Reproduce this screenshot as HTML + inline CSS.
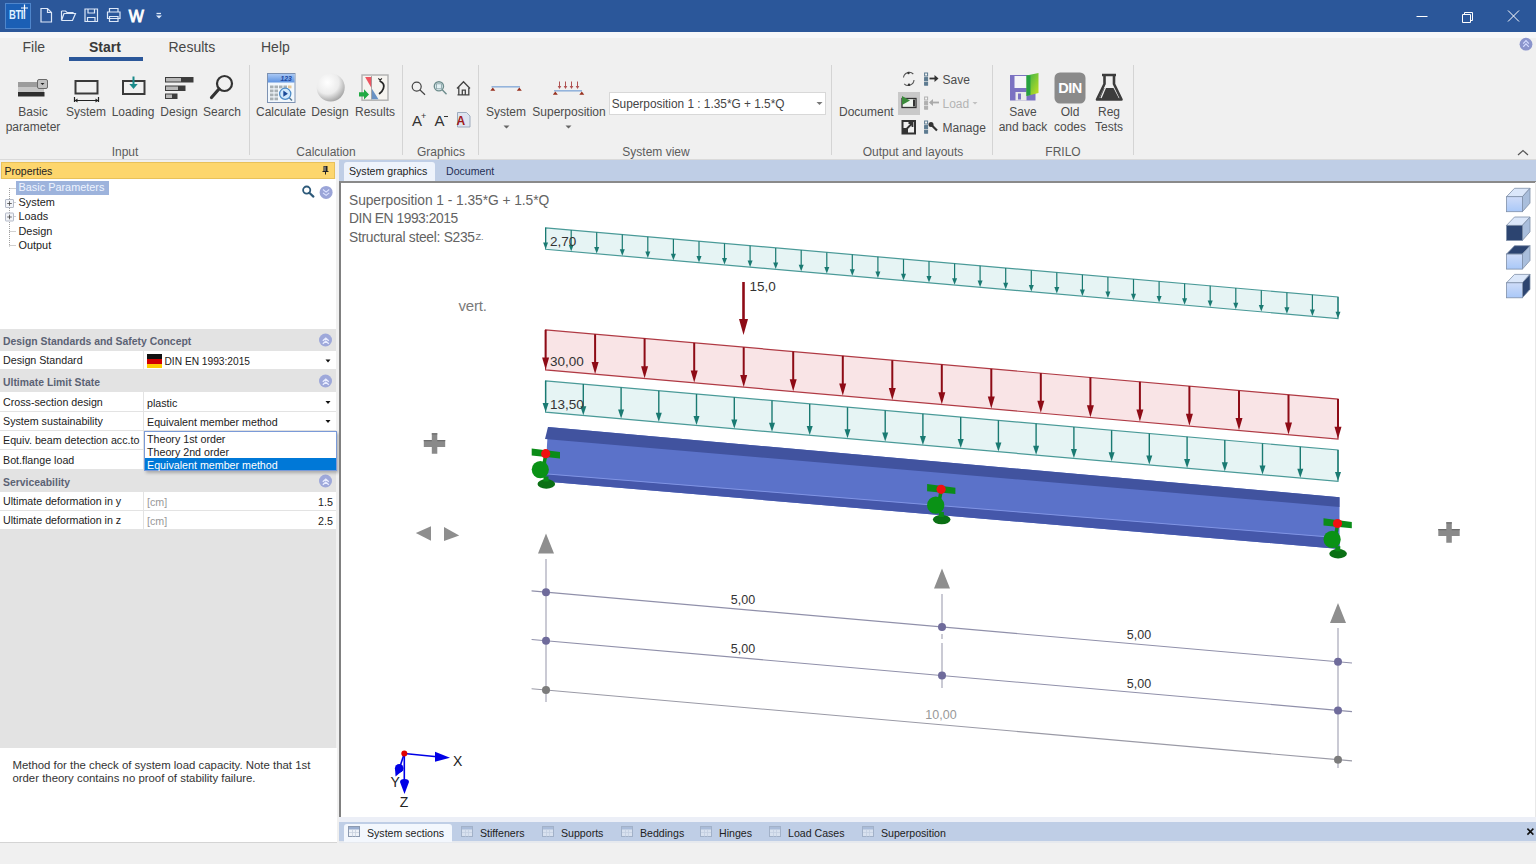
<!DOCTYPE html><html><head><meta charset="utf-8"><style>
*{box-sizing:border-box;margin:0;padding:0}
html,body{width:1536px;height:864px;overflow:hidden;background:#f0f0f0;font-family:"Liberation Sans",sans-serif;color:#222}
.a{position:absolute}
.t{position:absolute;white-space:nowrap;line-height:1}
svg{position:absolute;overflow:visible}
</style></head><body><div class="a" style="left:0px;top:0px;width:1536px;height:32px;background:#2b579a"></div>
<div class="a" style="left:0px;top:32px;width:1536px;height:6px;background:#f6f7f9"></div>
<div class="a" style="left:5px;top:3px;width:26px;height:26px;background:#1b5fb5;border:1px solid #4f86cc"></div>
<div class="t" style="left:9px;top:11.4px;font-size:9.5px;color:#dff0ff;font-weight:bold;letter-spacing:-0.4px;transform:scaleY(1.25);transform-origin:0 100%">BTII</div>
<svg style="left:0;top:0" width="40" height="32"><path d="M24.5 4.5v7M21 8h7" stroke="#fff" stroke-width="1.2"/></svg>
<svg style="left:0;top:0" width="170" height="32" fill="none" stroke="#dde8f8" stroke-width="1.2">
<path d="M41 8.5h6.5l4 4v9.5h-10.5z M47.5 8.5v4h4"/>
<path d="M61.5 11v9.5l2.5-7h11.5l-3 7h-11 M61.5 11h4l1.5 1.5h6v1.5"/>
<path d="M85 9h12.5v12.5h-12.5z M88 9v4h6.5v-4 M87.5 21.5v-4h7.5v4"/>
<path d="M109.5 12v-3.5h8.5v3.5 M107.5 12h12.5v6.5h-12.5z M109.5 16.5h8.5v5h-8.5z"/>
<path d="M156.5 13.5h4.5" stroke-width="1.3"/>
<path d="M156 15.5h6l-3 3z" fill="#dde8f8" stroke="none"/>
</svg>
<div class="t" style="left:128.8px;top:9.0px;font-size:16px;color:#fff;font-weight:normal;-webkit-text-stroke:0.9px #fff">W</div>
<svg style="left:0;top:0" width="1536" height="32" fill="none" stroke="#fff" stroke-width="1">
<path d="M1416.5 16.5h11"/>
<path d="M1462.5 14.5h8v8h-8z M1464.5 14.5v-2h8v8h-2"/>
<path d="M1508 10.5l11 11 M1519 10.5l-11 11"/>
</svg>
<div class="t" style="left:22.5px;top:40.4px;font-size:14px;color:#474747;font-weight:normal;">File</div>
<div class="t" style="left:89px;top:40.4px;font-size:14px;color:#383838;font-weight:bold;">Start</div>
<div class="t" style="left:168.5px;top:40.4px;font-size:14px;color:#474747;font-weight:normal;">Results</div>
<div class="t" style="left:261px;top:40.4px;font-size:14px;color:#474747;font-weight:normal;">Help</div>
<div class="a" style="left:69px;top:57px;width:74px;height:4px;background:#2b579a"></div>
<svg style="left:0;top:0" width="1536" height="60"><circle cx="1526" cy="44.2" r="6.4" fill="#8a94cc"/><path d="M1523.2 46.8l2.8-3 2.8 3 M1523.2 43.6l2.8-3 2.8 3" stroke="#d4dcff" stroke-width="1.2" fill="none"/></svg>
<div class="a" style="left:0px;top:159px;width:1536px;height:1px;background:#dadada"></div>
<div class="a" style="left:249px;top:65px;width:1px;height:90px;background:#d4d4d4"></div>
<div class="a" style="left:402px;top:65px;width:1px;height:90px;background:#d4d4d4"></div>
<div class="a" style="left:478px;top:65px;width:1px;height:90px;background:#d4d4d4"></div>
<div class="a" style="left:831px;top:65px;width:1px;height:90px;background:#d4d4d4"></div>
<div class="a" style="left:992px;top:65px;width:1px;height:90px;background:#d4d4d4"></div>
<div class="a" style="left:1133px;top:65px;width:1px;height:90px;background:#d4d4d4"></div>
<div class="t" style="left:25px;width:200px;text-align:center;top:145.8px;font-size:12px;color:#5c5c5c;font-weight:normal;">Input</div>
<div class="t" style="left:226px;width:200px;text-align:center;top:145.8px;font-size:12px;color:#5c5c5c;font-weight:normal;">Calculation</div>
<div class="t" style="left:341px;width:200px;text-align:center;top:145.8px;font-size:12px;color:#5c5c5c;font-weight:normal;">Graphics</div>
<div class="t" style="left:556px;width:200px;text-align:center;top:145.8px;font-size:12px;color:#5c5c5c;font-weight:normal;">System view</div>
<div class="t" style="left:813px;width:200px;text-align:center;top:145.8px;font-size:12px;color:#5c5c5c;font-weight:normal;">Output and layouts</div>
<div class="t" style="left:963px;width:200px;text-align:center;top:145.8px;font-size:12px;color:#5c5c5c;font-weight:normal;">FRILO</div>
<div class="t" style="left:-67px;width:200px;text-align:center;top:106.0px;font-size:12px;color:#4c4c4c;font-weight:normal;">Basic</div>
<div class="t" style="left:-14px;width:200px;text-align:center;top:106.0px;font-size:12px;color:#4c4c4c;font-weight:normal;">System</div>
<div class="t" style="left:33px;width:200px;text-align:center;top:106.0px;font-size:12px;color:#4c4c4c;font-weight:normal;">Loading</div>
<div class="t" style="left:79px;width:200px;text-align:center;top:106.0px;font-size:12px;color:#4c4c4c;font-weight:normal;">Design</div>
<div class="t" style="left:122px;width:200px;text-align:center;top:106.0px;font-size:12px;color:#4c4c4c;font-weight:normal;">Search</div>
<div class="t" style="left:181px;width:200px;text-align:center;top:106.0px;font-size:12px;color:#4c4c4c;font-weight:normal;">Calculate</div>
<div class="t" style="left:230px;width:200px;text-align:center;top:106.0px;font-size:12px;color:#4c4c4c;font-weight:normal;">Design</div>
<div class="t" style="left:275px;width:200px;text-align:center;top:106.0px;font-size:12px;color:#4c4c4c;font-weight:normal;">Results</div>
<div class="t" style="left:406px;width:200px;text-align:center;top:106.0px;font-size:12px;color:#4c4c4c;font-weight:normal;">System</div>
<div class="t" style="left:469px;width:200px;text-align:center;top:106.0px;font-size:12px;color:#4c4c4c;font-weight:normal;">Superposition</div>
<div class="t" style="left:923px;width:200px;text-align:center;top:106.0px;font-size:12px;color:#4c4c4c;font-weight:normal;">Save</div>
<div class="t" style="left:970px;width:200px;text-align:center;top:106.0px;font-size:12px;color:#4c4c4c;font-weight:normal;">Old</div>
<div class="t" style="left:1009px;width:200px;text-align:center;top:106.0px;font-size:12px;color:#4c4c4c;font-weight:normal;">Reg</div>
<div class="t" style="left:-67px;width:200px;text-align:center;top:121.1px;font-size:12px;color:#4c4c4c;font-weight:normal;">parameter</div>
<div class="t" style="left:923px;width:200px;text-align:center;top:121.1px;font-size:12px;color:#4c4c4c;font-weight:normal;">and back</div>
<div class="t" style="left:970px;width:200px;text-align:center;top:121.1px;font-size:12px;color:#4c4c4c;font-weight:normal;">codes</div>
<div class="t" style="left:1009px;width:200px;text-align:center;top:121.1px;font-size:12px;color:#4c4c4c;font-weight:normal;">Tests</div>
<div class="t" style="left:839px;top:106.0px;font-size:12px;color:#4c4c4c;font-weight:normal;">Document</div>
<div class="t" style="left:942.5px;top:74.3px;font-size:12px;color:#4c4c4c;font-weight:normal;">Save</div>
<div class="t" style="left:942.5px;top:98.3px;font-size:12px;color:#b4b4b4;font-weight:normal;">Load</div>
<div class="t" style="left:942.5px;top:122.3px;font-size:12px;color:#4c4c4c;font-weight:normal;">Manage</div>
<div class="a" style="left:1px;top:162px;width:334px;height:17px;background:#fdd66d;border:1px solid #e8c15a"></div>
<div class="t" style="left:4.5px;top:165.5px;font-size:10.5px;color:#222;font-weight:normal;">Properties</div>
<div class="a" style="left:0px;top:179px;width:336px;height:150px;background:#fff"></div>
<div class="a" style="left:16px;top:181px;width:93px;height:14px;background:#9db3dc"></div>
<div class="t" style="left:18.5px;top:181.8px;font-size:10.9px;color:#eef3ff;font-weight:normal;">Basic Parameters</div>
<div class="t" style="left:18.5px;top:197.3px;font-size:10.9px;color:#222;font-weight:normal;">System</div>
<div class="t" style="left:18.5px;top:211.2px;font-size:10.9px;color:#222;font-weight:normal;">Loads</div>
<div class="t" style="left:18.5px;top:225.6px;font-size:10.9px;color:#222;font-weight:normal;">Design</div>
<div class="t" style="left:18.5px;top:240.1px;font-size:10.9px;color:#222;font-weight:normal;">Output</div>
<div class="a" style="left:0px;top:329px;width:336px;height:419px;background:#e3e3e3"></div>
<div class="a" style="left:0px;top:329px;width:336px;height:22px;background:#e3e3e3"></div>
<div class="t" style="left:3px;top:337.0px;font-size:10.4px;color:#5b6274;font-weight:bold;">Design Standards and Safety Concept</div>
<svg style="left:0;top:0" width="1" height="1"><circle cx="325.5" cy="340" r="6.5" fill="#9ea8da"/></svg>
<div class="a" style="left:0px;top:351px;width:336px;height:18px;background:#fff"></div>
<div class="a" style="left:143px;top:351px;width:1px;height:19px;background:#e3e3e3"></div>
<div class="t" style="left:3px;top:354.8px;font-size:10.7px;color:#222;font-weight:normal;">Design Standard</div>
<div class="a" style="left:0px;top:370px;width:336px;height:22px;background:#e3e3e3"></div>
<div class="t" style="left:3px;top:378.0px;font-size:10.4px;color:#5b6274;font-weight:bold;">Ultimate Limit State</div>
<svg style="left:0;top:0" width="1" height="1"><circle cx="325.5" cy="381" r="6.5" fill="#9ea8da"/></svg>
<div class="a" style="left:0px;top:392px;width:336px;height:19px;background:#fff"></div>
<div class="a" style="left:143px;top:392px;width:1px;height:20px;background:#e3e3e3"></div>
<div class="t" style="left:3px;top:396.8px;font-size:10.7px;color:#222;font-weight:normal;">Cross-section design</div>
<div class="t" style="left:147px;top:397.5px;font-size:10.7px;color:#222;font-weight:normal;">plastic</div>
<div class="a" style="left:0px;top:412px;width:336px;height:18px;background:#fff"></div>
<div class="a" style="left:143px;top:412px;width:1px;height:19px;background:#e3e3e3"></div>
<div class="t" style="left:3px;top:415.8px;font-size:10.7px;color:#222;font-weight:normal;">System sustainability</div>
<div class="t" style="left:147px;top:416.5px;font-size:10.7px;color:#222;font-weight:normal;">Equivalent member method</div>
<div class="a" style="left:0px;top:431px;width:336px;height:18px;background:#fff"></div>
<div class="a" style="left:143px;top:431px;width:1px;height:19px;background:#e3e3e3"></div>
<div class="t" style="left:3px;top:434.8px;font-size:10.7px;color:#222;font-weight:normal;">Equiv. beam detection acc.to</div>
<div class="a" style="left:0px;top:450px;width:336px;height:19px;background:#fff"></div>
<div class="a" style="left:143px;top:450px;width:1px;height:20px;background:#e3e3e3"></div>
<div class="t" style="left:3px;top:454.8px;font-size:10.7px;color:#222;font-weight:normal;">Bot.flange load</div>
<div class="a" style="left:0px;top:470px;width:336px;height:22px;background:#e3e3e3"></div>
<div class="t" style="left:3px;top:478.0px;font-size:10.4px;color:#5b6274;font-weight:bold;">Serviceability</div>
<svg style="left:0;top:0" width="1" height="1"><circle cx="325.5" cy="481" r="6.5" fill="#9ea8da"/></svg>
<div class="a" style="left:0px;top:492px;width:336px;height:18px;background:#fff"></div>
<div class="a" style="left:143px;top:492px;width:1px;height:19px;background:#e3e3e3"></div>
<div class="t" style="left:3px;top:495.8px;font-size:10.7px;color:#222;font-weight:normal;">Ultimate deformation in y</div>
<div class="t" style="left:147px;top:496.5px;font-size:10.7px;color:#999;font-weight:normal;">[cm]</div>
<div class="a" style="left:0px;top:511px;width:336px;height:18px;background:#fff"></div>
<div class="a" style="left:143px;top:511px;width:1px;height:19px;background:#e3e3e3"></div>
<div class="t" style="left:3px;top:514.8px;font-size:10.7px;color:#222;font-weight:normal;">Ultimate deformation in z</div>
<div class="t" style="left:147px;top:515.5px;font-size:10.7px;color:#999;font-weight:normal;">[cm]</div>
<div class="t" style="left:164.5px;top:357.1px;font-size:10.2px;color:#222;font-weight:normal;">DIN EN 1993:2015</div>
<div class="a" style="left:147px;top:354px;width:15px;height:5px;background:#111"></div><div class="a" style="left:147px;top:359px;width:15px;height:5px;background:#d10000"></div><div class="a" style="left:147px;top:364px;width:15px;height:4px;background:#fc0"></div>
<div class="t" style="left:318px;top:496.8px;font-size:10.7px;color:#222;font-weight:normal;">1.5</div>
<div class="t" style="left:318px;top:515.8px;font-size:10.7px;color:#222;font-weight:normal;">2.5</div>
<div class="a" style="left:144px;top:431px;width:193px;height:40px;background:#fff;border:1px solid #7a9ad8;box-shadow:2px 2px 3px rgba(0,0,0,0.25)"></div>
<div class="a" style="left:145px;top:458px;width:191px;height:12px;background:#0078d7"></div>
<div class="t" style="left:147px;top:433.8px;font-size:10.7px;color:#222;font-weight:normal;">Theory 1st order</div>
<div class="t" style="left:147px;top:446.8px;font-size:10.7px;color:#222;font-weight:normal;">Theory 2nd order</div>
<div class="t" style="left:147px;top:459.8px;font-size:10.7px;color:#fff;font-weight:normal;">Equivalent member method</div>
<div class="a" style="left:0px;top:748px;width:337px;height:95px;background:#fff;border-bottom:1px solid #d4d4d4"></div>
<div class="t" style="left:12.4px;top:759.7px;font-size:11.4px;color:#333;font-weight:normal;">Method for the check of system load capacity. Note that 1st</div>
<div class="t" style="left:12.4px;top:773.2px;font-size:11.4px;color:#333;font-weight:normal;">order theory contains no proof of stability failure.</div>
<div class="a" style="left:339px;top:160px;width:1197px;height:22px;background:#bfcee6"></div>
<div class="a" style="left:344px;top:162px;width:91px;height:19px;background:#eef3fb;border-radius:3px 3px 0 0"></div>
<div class="t" style="left:349px;top:165.8px;font-size:10.6px;color:#222;font-weight:normal;">System graphics</div>
<div class="t" style="left:446px;top:165.8px;font-size:10.6px;color:#1f2f55;font-weight:normal;">Document</div>
<div class="a" style="left:339px;top:181px;width:1197px;height:637px;background:#fff;border-left:2px solid #808080;border-top:2px solid #8a8a8a"></div>
<div class="a" style="left:339px;top:817px;width:1197px;height:5px;background:#eceff7"></div>
<div class="a" style="left:339px;top:822px;width:1197px;height:19px;background:#bfcee6"></div>
<div class="a" style="left:339px;top:841px;width:1197px;height:2px;background:#e6e9ee"></div>
<div class="a" style="left:344px;top:824px;width:108px;height:18px;background:#f3f7fd;border-radius:3px 3px 0 0"></div>
<div class="t" style="left:367px;top:827.8px;font-size:10.6px;color:#222;font-weight:normal;">System sections</div>
<div class="t" style="left:480px;top:827.8px;font-size:10.6px;color:#222;font-weight:normal;">Stiffeners</div>
<div class="t" style="left:561px;top:827.8px;font-size:10.6px;color:#222;font-weight:normal;">Supports</div>
<div class="t" style="left:640px;top:827.8px;font-size:10.6px;color:#222;font-weight:normal;">Beddings</div>
<div class="t" style="left:719px;top:827.8px;font-size:10.6px;color:#222;font-weight:normal;">Hinges</div>
<div class="t" style="left:788px;top:827.8px;font-size:10.6px;color:#222;font-weight:normal;">Load Cases</div>
<div class="t" style="left:881px;top:827.8px;font-size:10.6px;color:#222;font-weight:normal;">Superposition</div>
<svg style="left:0;top:0" width="1536" height="864"><g opacity="1"><rect x="348.5" y="826.5" width="11" height="10" fill="#eef2f8" stroke="#8c9ab0" stroke-width="1"/><rect x="349" y="827" width="10" height="2.5" fill="#9aaed0"/><path d="M352.5 829.5v7 M355.5 829.5v7 M349 832.5h10" stroke="#c8d0de" stroke-width="0.8"/></g><g opacity="0.55"><rect x="461.5" y="826.5" width="11" height="10" fill="#eef2f8" stroke="#8c9ab0" stroke-width="1"/><rect x="462" y="827" width="10" height="2.5" fill="#9aaed0"/><path d="M465.5 829.5v7 M468.5 829.5v7 M462 832.5h10" stroke="#c8d0de" stroke-width="0.8"/></g><g opacity="0.55"><rect x="542.5" y="826.5" width="11" height="10" fill="#eef2f8" stroke="#8c9ab0" stroke-width="1"/><rect x="543" y="827" width="10" height="2.5" fill="#9aaed0"/><path d="M546.5 829.5v7 M549.5 829.5v7 M543 832.5h10" stroke="#c8d0de" stroke-width="0.8"/></g><g opacity="0.55"><rect x="621.5" y="826.5" width="11" height="10" fill="#eef2f8" stroke="#8c9ab0" stroke-width="1"/><rect x="622" y="827" width="10" height="2.5" fill="#9aaed0"/><path d="M625.5 829.5v7 M628.5 829.5v7 M622 832.5h10" stroke="#c8d0de" stroke-width="0.8"/></g><g opacity="0.55"><rect x="700.5" y="826.5" width="11" height="10" fill="#eef2f8" stroke="#8c9ab0" stroke-width="1"/><rect x="701" y="827" width="10" height="2.5" fill="#9aaed0"/><path d="M704.5 829.5v7 M707.5 829.5v7 M701 832.5h10" stroke="#c8d0de" stroke-width="0.8"/></g><g opacity="0.55"><rect x="769.5" y="826.5" width="11" height="10" fill="#eef2f8" stroke="#8c9ab0" stroke-width="1"/><rect x="770" y="827" width="10" height="2.5" fill="#9aaed0"/><path d="M773.5 829.5v7 M776.5 829.5v7 M770 832.5h10" stroke="#c8d0de" stroke-width="0.8"/></g><g opacity="0.55"><rect x="862.5" y="826.5" width="11" height="10" fill="#eef2f8" stroke="#8c9ab0" stroke-width="1"/><rect x="863" y="827" width="10" height="2.5" fill="#9aaed0"/><path d="M866.5 829.5v7 M869.5 829.5v7 M863 832.5h10" stroke="#c8d0de" stroke-width="0.8"/></g><path d="M1527.4 828.6l6 6 M1533.4 828.6l-6 6" stroke="#111" stroke-width="1.5"/></svg>
<div class="a" style="left:1535px;top:182px;width:1px;height:635px;background:#e8e8e8"></div>
<div class="t" style="left:349px;top:194.4px;font-size:13.8px;color:#636363;font-weight:normal;letter-spacing:-0.06px">Superposition 1 - 1.35*G + 1.5*Q</div>
<div class="t" style="left:349px;top:212.4px;font-size:13.8px;color:#636363;font-weight:normal;letter-spacing:-0.45px">DIN EN 1993:2015</div>
<div class="t" style="left:349px;top:231.4px;font-size:13.8px;color:#636363;font-weight:normal;letter-spacing:-0.28px">Structural steel: S235</div>
<div class="t" style="left:475.5px;top:232.6px;font-size:9px;color:#6a6a6a;font-weight:normal;">Z.</div>
<div class="t" style="left:458.5px;top:298.1px;font-size:15px;color:#7a7a7a;font-weight:normal;letter-spacing:-0.2px">vert.</div>
<svg style="left:0;top:0" width="1536" height="864"><defs><linearGradient id="cf" x1="0" y1="0" x2="0" y2="1"><stop offset="0" stop-color="#cfdcf8"/><stop offset="1" stop-color="#a9c8f8"/></linearGradient></defs><polygon points="545.6,227.8 1338.0,297.0 1338.0,318.5 545.6,249.3" fill="#e6f4f4" stroke="#4a9a98" stroke-width="1.2"/><path d="M545.6 227.8V243.5" stroke="#1a7a72" stroke-width="1.2"/><path d="M543.1 242.5L548.1 242.5L545.6 249.0z" fill="#1a7a72"/><path d="M571.2 230.0V245.7" stroke="#1a7a72" stroke-width="1.2"/><path d="M568.7 244.7L573.7 244.7L571.2 251.2z" fill="#1a7a72"/><path d="M596.7 232.3V248.0" stroke="#1a7a72" stroke-width="1.2"/><path d="M594.2 247.0L599.2 247.0L596.7 253.5z" fill="#1a7a72"/><path d="M622.3 234.5V250.2" stroke="#1a7a72" stroke-width="1.2"/><path d="M619.8 249.2L624.8 249.2L622.3 255.7z" fill="#1a7a72"/><path d="M647.8 236.7V252.4" stroke="#1a7a72" stroke-width="1.2"/><path d="M645.3 251.4L650.3 251.4L647.8 257.9z" fill="#1a7a72"/><path d="M673.4 239.0V254.7" stroke="#1a7a72" stroke-width="1.2"/><path d="M670.9 253.7L675.9 253.7L673.4 260.2z" fill="#1a7a72"/><path d="M699.0 241.2V256.9" stroke="#1a7a72" stroke-width="1.2"/><path d="M696.5 255.9L701.5 255.9L699.0 262.4z" fill="#1a7a72"/><path d="M724.5 243.4V259.1" stroke="#1a7a72" stroke-width="1.2"/><path d="M722.0 258.1L727.0 258.1L724.5 264.6z" fill="#1a7a72"/><path d="M750.1 245.7V261.4" stroke="#1a7a72" stroke-width="1.2"/><path d="M747.6 260.4L752.6 260.4L750.1 266.9z" fill="#1a7a72"/><path d="M775.7 247.9V263.6" stroke="#1a7a72" stroke-width="1.2"/><path d="M773.2 262.6L778.2 262.6L775.7 269.1z" fill="#1a7a72"/><path d="M801.2 250.1V265.8" stroke="#1a7a72" stroke-width="1.2"/><path d="M798.7 264.8L803.7 264.8L801.2 271.3z" fill="#1a7a72"/><path d="M826.8 252.4V268.1" stroke="#1a7a72" stroke-width="1.2"/><path d="M824.3 267.1L829.3 267.1L826.8 273.6z" fill="#1a7a72"/><path d="M852.3 254.6V270.3" stroke="#1a7a72" stroke-width="1.2"/><path d="M849.8 269.3L854.8 269.3L852.3 275.8z" fill="#1a7a72"/><path d="M877.9 256.8V272.5" stroke="#1a7a72" stroke-width="1.2"/><path d="M875.4 271.5L880.4 271.5L877.9 278.0z" fill="#1a7a72"/><path d="M903.5 259.1V274.8" stroke="#1a7a72" stroke-width="1.2"/><path d="M901.0 273.8L906.0 273.8L903.5 280.3z" fill="#1a7a72"/><path d="M929.0 261.3V277.0" stroke="#1a7a72" stroke-width="1.2"/><path d="M926.5 276.0L931.5 276.0L929.0 282.5z" fill="#1a7a72"/><path d="M954.6 263.5V279.2" stroke="#1a7a72" stroke-width="1.2"/><path d="M952.1 278.2L957.1 278.2L954.6 284.7z" fill="#1a7a72"/><path d="M980.1 265.7V281.4" stroke="#1a7a72" stroke-width="1.2"/><path d="M977.6 280.4L982.6 280.4L980.1 286.9z" fill="#1a7a72"/><path d="M1005.7 268.0V283.7" stroke="#1a7a72" stroke-width="1.2"/><path d="M1003.2 282.7L1008.2 282.7L1005.7 289.2z" fill="#1a7a72"/><path d="M1031.3 270.2V285.9" stroke="#1a7a72" stroke-width="1.2"/><path d="M1028.8 284.9L1033.8 284.9L1031.3 291.4z" fill="#1a7a72"/><path d="M1056.8 272.4V288.1" stroke="#1a7a72" stroke-width="1.2"/><path d="M1054.3 287.1L1059.3 287.1L1056.8 293.6z" fill="#1a7a72"/><path d="M1082.4 274.7V290.4" stroke="#1a7a72" stroke-width="1.2"/><path d="M1079.9 289.4L1084.9 289.4L1082.4 295.9z" fill="#1a7a72"/><path d="M1107.9 276.9V292.6" stroke="#1a7a72" stroke-width="1.2"/><path d="M1105.4 291.6L1110.4 291.6L1107.9 298.1z" fill="#1a7a72"/><path d="M1133.5 279.1V294.8" stroke="#1a7a72" stroke-width="1.2"/><path d="M1131.0 293.8L1136.0 293.8L1133.5 300.3z" fill="#1a7a72"/><path d="M1159.1 281.4V297.1" stroke="#1a7a72" stroke-width="1.2"/><path d="M1156.6 296.1L1161.6 296.1L1159.1 302.6z" fill="#1a7a72"/><path d="M1184.6 283.6V299.3" stroke="#1a7a72" stroke-width="1.2"/><path d="M1182.1 298.3L1187.1 298.3L1184.6 304.8z" fill="#1a7a72"/><path d="M1210.2 285.8V301.5" stroke="#1a7a72" stroke-width="1.2"/><path d="M1207.7 300.5L1212.7 300.5L1210.2 307.0z" fill="#1a7a72"/><path d="M1235.8 288.1V303.8" stroke="#1a7a72" stroke-width="1.2"/><path d="M1233.3 302.8L1238.3 302.8L1235.8 309.3z" fill="#1a7a72"/><path d="M1261.3 290.3V306.0" stroke="#1a7a72" stroke-width="1.2"/><path d="M1258.8 305.0L1263.8 305.0L1261.3 311.5z" fill="#1a7a72"/><path d="M1286.9 292.5V308.2" stroke="#1a7a72" stroke-width="1.2"/><path d="M1284.4 307.2L1289.4 307.2L1286.9 313.7z" fill="#1a7a72"/><path d="M1312.4 294.8V310.5" stroke="#1a7a72" stroke-width="1.2"/><path d="M1309.9 309.5L1314.9 309.5L1312.4 316.0z" fill="#1a7a72"/><path d="M1338.0 297.0V312.7" stroke="#1a7a72" stroke-width="1.2"/><path d="M1335.5 311.7L1340.5 311.7L1338.0 318.2z" fill="#1a7a72"/><polygon points="545.6,329.9 1338.0,399.1 1338.0,439.1 545.6,369.9" fill="#f9e4e6" stroke="#b03a44" stroke-width="1.2"/><path d="M545.6 329.9V358.6" stroke="#8e0b16" stroke-width="2.0"/><path d="M542.1 357.6L549.1 357.6L545.6 369.6z" fill="#8e0b16"/><path d="M595.1 334.2V362.9" stroke="#8e0b16" stroke-width="2.0"/><path d="M591.6 361.9L598.6 361.9L595.1 373.9z" fill="#8e0b16"/><path d="M644.6 338.5V367.2" stroke="#8e0b16" stroke-width="2.0"/><path d="M641.1 366.2L648.1 366.2L644.6 378.2z" fill="#8e0b16"/><path d="M694.2 342.9V371.6" stroke="#8e0b16" stroke-width="2.0"/><path d="M690.7 370.6L697.7 370.6L694.2 382.6z" fill="#8e0b16"/><path d="M743.7 347.2V375.9" stroke="#8e0b16" stroke-width="2.0"/><path d="M740.2 374.9L747.2 374.9L743.7 386.9z" fill="#8e0b16"/><path d="M793.2 351.5V380.2" stroke="#8e0b16" stroke-width="2.0"/><path d="M789.7 379.2L796.7 379.2L793.2 391.2z" fill="#8e0b16"/><path d="M842.8 355.8V384.5" stroke="#8e0b16" stroke-width="2.0"/><path d="M839.2 383.5L846.2 383.5L842.8 395.5z" fill="#8e0b16"/><path d="M892.3 360.2V388.9" stroke="#8e0b16" stroke-width="2.0"/><path d="M888.8 387.9L895.8 387.9L892.3 399.9z" fill="#8e0b16"/><path d="M941.8 364.5V393.2" stroke="#8e0b16" stroke-width="2.0"/><path d="M938.3 392.2L945.3 392.2L941.8 404.2z" fill="#8e0b16"/><path d="M991.3 368.8V397.5" stroke="#8e0b16" stroke-width="2.0"/><path d="M987.8 396.5L994.8 396.5L991.3 408.5z" fill="#8e0b16"/><path d="M1040.8 373.1V401.8" stroke="#8e0b16" stroke-width="2.0"/><path d="M1037.3 400.8L1044.3 400.8L1040.8 412.8z" fill="#8e0b16"/><path d="M1090.4 377.5V406.2" stroke="#8e0b16" stroke-width="2.0"/><path d="M1086.9 405.2L1093.9 405.2L1090.4 417.2z" fill="#8e0b16"/><path d="M1139.9 381.8V410.5" stroke="#8e0b16" stroke-width="2.0"/><path d="M1136.4 409.5L1143.4 409.5L1139.9 421.5z" fill="#8e0b16"/><path d="M1189.4 386.1V414.8" stroke="#8e0b16" stroke-width="2.0"/><path d="M1185.9 413.8L1192.9 413.8L1189.4 425.8z" fill="#8e0b16"/><path d="M1239.0 390.4V419.1" stroke="#8e0b16" stroke-width="2.0"/><path d="M1235.5 418.1L1242.5 418.1L1239.0 430.1z" fill="#8e0b16"/><path d="M1288.5 394.8V423.5" stroke="#8e0b16" stroke-width="2.0"/><path d="M1285.0 422.5L1292.0 422.5L1288.5 434.5z" fill="#8e0b16"/><path d="M1338.0 399.1V427.8" stroke="#8e0b16" stroke-width="2.0"/><path d="M1334.5 426.8L1341.5 426.8L1338.0 438.8z" fill="#8e0b16"/><polygon points="545.6,380.8 1338.0,450.0 1338.0,481.4 545.6,412.2" fill="#e6f4f4" stroke="#4a9a98" stroke-width="1.2"/><path d="M545.6 380.8V403.9" stroke="#1a7a72" stroke-width="1.4"/><path d="M542.6 402.9L548.6 402.9L545.6 411.9z" fill="#1a7a72"/><path d="M583.3 384.1V407.2" stroke="#1a7a72" stroke-width="1.4"/><path d="M580.3 406.2L586.3 406.2L583.3 415.2z" fill="#1a7a72"/><path d="M621.1 387.4V410.5" stroke="#1a7a72" stroke-width="1.4"/><path d="M618.1 409.5L624.1 409.5L621.1 418.5z" fill="#1a7a72"/><path d="M658.8 390.7V413.8" stroke="#1a7a72" stroke-width="1.4"/><path d="M655.8 412.8L661.8 412.8L658.8 421.8z" fill="#1a7a72"/><path d="M696.5 394.0V417.1" stroke="#1a7a72" stroke-width="1.4"/><path d="M693.5 416.1L699.5 416.1L696.5 425.1z" fill="#1a7a72"/><path d="M734.3 397.3V420.4" stroke="#1a7a72" stroke-width="1.4"/><path d="M731.3 419.4L737.3 419.4L734.3 428.4z" fill="#1a7a72"/><path d="M772.0 400.6V423.7" stroke="#1a7a72" stroke-width="1.4"/><path d="M769.0 422.7L775.0 422.7L772.0 431.7z" fill="#1a7a72"/><path d="M809.7 403.9V427.0" stroke="#1a7a72" stroke-width="1.4"/><path d="M806.7 426.0L812.7 426.0L809.7 435.0z" fill="#1a7a72"/><path d="M847.5 407.2V430.3" stroke="#1a7a72" stroke-width="1.4"/><path d="M844.5 429.3L850.5 429.3L847.5 438.3z" fill="#1a7a72"/><path d="M885.2 410.5V433.6" stroke="#1a7a72" stroke-width="1.4"/><path d="M882.2 432.6L888.2 432.6L885.2 441.6z" fill="#1a7a72"/><path d="M922.9 413.8V436.9" stroke="#1a7a72" stroke-width="1.4"/><path d="M919.9 435.9L925.9 435.9L922.9 444.9z" fill="#1a7a72"/><path d="M960.7 417.0V440.1" stroke="#1a7a72" stroke-width="1.4"/><path d="M957.7 439.1L963.7 439.1L960.7 448.1z" fill="#1a7a72"/><path d="M998.4 420.3V443.4" stroke="#1a7a72" stroke-width="1.4"/><path d="M995.4 442.4L1001.4 442.4L998.4 451.4z" fill="#1a7a72"/><path d="M1036.1 423.6V446.7" stroke="#1a7a72" stroke-width="1.4"/><path d="M1033.1 445.7L1039.1 445.7L1036.1 454.7z" fill="#1a7a72"/><path d="M1073.9 426.9V450.0" stroke="#1a7a72" stroke-width="1.4"/><path d="M1070.9 449.0L1076.9 449.0L1073.9 458.0z" fill="#1a7a72"/><path d="M1111.6 430.2V453.3" stroke="#1a7a72" stroke-width="1.4"/><path d="M1108.6 452.3L1114.6 452.3L1111.6 461.3z" fill="#1a7a72"/><path d="M1149.3 433.5V456.6" stroke="#1a7a72" stroke-width="1.4"/><path d="M1146.3 455.6L1152.3 455.6L1149.3 464.6z" fill="#1a7a72"/><path d="M1187.1 436.8V459.9" stroke="#1a7a72" stroke-width="1.4"/><path d="M1184.1 458.9L1190.1 458.9L1187.1 467.9z" fill="#1a7a72"/><path d="M1224.8 440.1V463.2" stroke="#1a7a72" stroke-width="1.4"/><path d="M1221.8 462.2L1227.8 462.2L1224.8 471.2z" fill="#1a7a72"/><path d="M1262.5 443.4V466.5" stroke="#1a7a72" stroke-width="1.4"/><path d="M1259.5 465.5L1265.5 465.5L1262.5 474.5z" fill="#1a7a72"/><path d="M1300.3 446.7V469.8" stroke="#1a7a72" stroke-width="1.4"/><path d="M1297.3 468.8L1303.3 468.8L1300.3 477.8z" fill="#1a7a72"/><path d="M1338.0 450.0V473.1" stroke="#1a7a72" stroke-width="1.4"/><path d="M1335.0 472.1L1341.0 472.1L1338.0 481.1z" fill="#1a7a72"/><path d="M743.5 282V322" stroke="#8e0b16" stroke-width="2.6"/><path d="M739 319L748 319L743.5 335z" fill="#8e0b16"/><polygon points="548.0,427.0 1339.5,497.2 1339.5,549.0 545.0,481.5" fill="#5b72c9"/><polygon points="548.0,427.0 1339.5,497.2 1339.5,507.0 545.0,439.0" fill="#41539f"/><polygon points="545.0,474.0 1339.5,538.0 1339.5,549.0 545.0,481.5" fill="#4557aa"/><path d="M545 473.8L1339.5 537.8" stroke="#8094e4" stroke-width="1"/><ellipse cx="546.3" cy="484.0" rx="8.8" ry="4.7" fill="#0a7014"/><rect x="543.5" y="476.4" width="5" height="5" fill="#0a8a16"/><path d="M545.5 456.4L544 464.4" stroke="#0a8a16" stroke-width="3.5"/><circle cx="540.3" cy="469.59999999999997" r="8.6" fill="#0a9216"/><polygon points="531.7,448.4 560,452.09999999999997 560,458.5 531.7,455.59999999999997" fill="#0b8c18"/><circle cx="545.7" cy="453.7" r="4.6" fill="#f01010"/><ellipse cx="941.6999999999999" cy="519.6" rx="8.8" ry="4.7" fill="#0a7014"/><rect x="938.9" y="512" width="5" height="5" fill="#0a8a16"/><path d="M940.9 492L939.4 500" stroke="#0a8a16" stroke-width="3.5"/><circle cx="935.6999999999999" cy="505.2" r="8.6" fill="#0a9216"/><polygon points="927.1,484 955.4,487.7 955.4,494.1 927.1,491.2" fill="#0b8c18"/><circle cx="941.1" cy="489.3" r="4.6" fill="#f01010"/><ellipse cx="1338.1" cy="553.8000000000001" rx="8.8" ry="4.7" fill="#0a7014"/><rect x="1335.3" y="546.2" width="5" height="5" fill="#0a8a16"/><path d="M1337.3 526.2L1335.8 534.2" stroke="#0a8a16" stroke-width="3.5"/><circle cx="1332.1" cy="539.4000000000001" r="8.6" fill="#0a9216"/><polygon points="1323.5,518.2 1351.8,521.9000000000001 1351.8,528.3000000000001 1323.5,525.4000000000001" fill="#0b8c18"/><circle cx="1337.5" cy="523.5" r="4.6" fill="#f01010"/><path d="M546 559V702" stroke="#b9b9c6" stroke-width="1.5"/><path d="M942 594V631" stroke="#b9b9c6" stroke-width="1.5"/><path d="M942 634V639" stroke="#b9b9c6" stroke-width="1.5"/><path d="M942 643V688" stroke="#b9b9c6" stroke-width="1.5"/><path d="M1338 628V768" stroke="#b9b9c6" stroke-width="1.5"/><path d="M531.6 590.9L1352 663.0" stroke="#9090aa" stroke-width="1.1"/><path d="M531.6 639.5L1352 711.6" stroke="#9090aa" stroke-width="1.1"/><path d="M531.6 688.8L1352 760.9" stroke="#9a9aa6" stroke-width="1.1"/><circle cx="546" cy="592.2" r="4" fill="#6f6b9b"/><circle cx="546" cy="640.8" r="4" fill="#6f6b9b"/><circle cx="546" cy="690.1" r="4" fill="#7c7c7c"/><circle cx="942" cy="627.0" r="4" fill="#6f6b9b"/><circle cx="942" cy="675.6" r="4" fill="#6f6b9b"/><circle cx="1338" cy="661.8" r="4" fill="#6f6b9b"/><circle cx="1338" cy="710.4" r="4" fill="#6f6b9b"/><circle cx="1338" cy="759.7" r="4" fill="#7c7c7c"/><path d="M546 533.4L554 553.4L538 553.4z" fill="#8e8e8e"/><path d="M942 568.6L950 588.6L934 588.6z" fill="#8e8e8e"/><path d="M1338 603L1346 623L1330 623z" fill="#8e8e8e"/><polygon points="1506.5,196.7 1514.5,188.3 1530,188.3 1522.4,196.7" fill="#dbe7fa" stroke="#7f8fa8" stroke-width="0.8"/><polygon points="1522.4,196.7 1530,188.3 1530,203.1 1522.4,211.7" fill="#a9bedc" stroke="#7f8fa8" stroke-width="0.8"/><rect x="1506.5" y="196.7" width="15.9" height="15" fill="url(#cf)" stroke="#7f8fa8" stroke-width="0.8"/><polygon points="1506.5,225.4 1514.5,217.0 1530,217.0 1522.4,225.4" fill="#dbe7fa" stroke="#7f8fa8" stroke-width="0.8"/><polygon points="1522.4,225.4 1530,217.0 1530,231.8 1522.4,240.4" fill="#a9bedc" stroke="#7f8fa8" stroke-width="0.8"/><rect x="1506.5" y="225.4" width="15.9" height="15" fill="#2c4470" stroke="#7f8fa8" stroke-width="0.8"/><polygon points="1506.5,254.1 1514.5,245.7 1530,245.7 1522.4,254.1" fill="#2c4470" stroke="#7f8fa8" stroke-width="0.8"/><polygon points="1522.4,254.1 1530,245.7 1530,260.5 1522.4,269.1" fill="#a9bedc" stroke="#7f8fa8" stroke-width="0.8"/><rect x="1506.5" y="254.1" width="15.9" height="15" fill="url(#cf)" stroke="#7f8fa8" stroke-width="0.8"/><polygon points="1506.5,282.8 1514.5,274.4 1530,274.4 1522.4,282.8" fill="#dbe7fa" stroke="#7f8fa8" stroke-width="0.8"/><polygon points="1522.4,282.8 1530,274.4 1530,289.2 1522.4,297.8" fill="#2c4470" stroke="#7f8fa8" stroke-width="0.8"/><rect x="1506.5" y="282.8" width="15.9" height="15" fill="url(#cf)" stroke="#7f8fa8" stroke-width="0.8"/><path d="M430 435.5h8v4h4v8h-4v4h-8v-4h-4v-8h4z" fill="none"/><path d="M431.8 433.2h5.5v6.7h7.9v7.2h-7.9v6.7h-5.5v-6.7h-8v-7.2h8z" fill="#8a8a8a"/><path d="M431.8 433.2h5.5v1.3h-5.5z M423.8 439.9h8v1.3h-8z M437.3 439.9h7.9v1.3h-7.9z" fill="#6c6c6c"/><path d="M1446.3 522.2h5.5v6.7h7.9v7.2h-7.9v6.7h-5.5v-6.7h-8v-7.2h8z" fill="#8a8a8a"/><path d="M1446.3 522.2h5.5v1.3h-5.5z M1438.3 528.9h8v1.3h-8z M1451.8 528.9h7.9v1.3h-7.9z" fill="#6c6c6c"/><path d="M415.8 533L431 526.3V540.8z" fill="#8e8e8e"/><path d="M459.2 535.5L444 527V541z" fill="#8e8e8e"/><path d="M404.3 753.5L437 756.8" stroke="#0000e6" stroke-width="1.6"/><path d="M435 751.8L450 757.8L435 761.8z" fill="#0000e6"/><path d="M404.3 753.5V782" stroke="#0000e6" stroke-width="1.6"/><path d="M400 782a4.5 3 0 0 1 9 0L404.5 794z" fill="#0000e6"/><path d="M404.3 753.5L400.5 765" stroke="#0000e6" stroke-width="1.6"/><circle cx="399.2" cy="768.3" r="4.3" fill="#0000e6"/><path d="M395 768.5L403.5 770L395.5 776.5z" fill="#0000e6"/><circle cx="404.3" cy="753.5" r="3" fill="#e00000"/></svg>
<div class="t" style="left:550px;top:235.3px;font-size:13.5px;color:#333;font-weight:normal;">2,70</div>
<div class="t" style="left:749.6px;top:280.1px;font-size:13.5px;color:#333;font-weight:normal;">15,0</div>
<div class="t" style="left:550px;top:355.1px;font-size:13.5px;color:#333;font-weight:normal;">30,00</div>
<div class="t" style="left:550px;top:397.6px;font-size:13.5px;color:#333;font-weight:normal;">13,50</div>
<div class="t" style="left:643px;width:200px;text-align:center;top:594.4px;font-size:12.5px;color:#333;font-weight:normal;">5,00</div>
<div class="t" style="left:1039px;width:200px;text-align:center;top:629.4px;font-size:12.5px;color:#333;font-weight:normal;">5,00</div>
<div class="t" style="left:643px;width:200px;text-align:center;top:643.4px;font-size:12.5px;color:#333;font-weight:normal;">5,00</div>
<div class="t" style="left:1039px;width:200px;text-align:center;top:678.4px;font-size:12.5px;color:#333;font-weight:normal;">5,00</div>
<div class="t" style="left:841px;width:200px;text-align:center;top:709.4px;font-size:12.5px;color:#999;font-weight:normal;">10,00</div>
<div class="t" style="left:453px;top:753.7px;font-size:14px;color:#222;font-weight:normal;">X</div>
<div class="t" style="left:390.5px;top:775.2px;font-size:14px;color:#222;font-weight:normal;">Y</div>
<div class="t" style="left:399.8px;top:795.4px;font-size:14px;color:#222;font-weight:normal;">Z</div>
<svg style="left:0;top:0" width="340" height="864"><path d="M9.5 188V246.5" stroke="#a0a0a0" stroke-width="1" stroke-dasharray="1 1"/><path d="M9.5 188.5H16" stroke="#a0a0a0" stroke-width="1" stroke-dasharray="1 1"/><path d="M9.5 202.5H16" stroke="#a0a0a0" stroke-width="1" stroke-dasharray="1 1"/><path d="M9.5 216.5H16" stroke="#a0a0a0" stroke-width="1" stroke-dasharray="1 1"/><path d="M9.5 231.5H16" stroke="#a0a0a0" stroke-width="1" stroke-dasharray="1 1"/><path d="M9.5 245.5H16" stroke="#a0a0a0" stroke-width="1" stroke-dasharray="1 1"/><rect x="5.5" y="199.5" width="8" height="8" rx="0.5" fill="#f2f4f8" stroke="#b4bac8" stroke-width="1"/><path d="M7.2 203.5h4.6 M9.5 201.2v4.6" stroke="#444" stroke-width="0.8"/><rect x="5.5" y="213" width="8" height="8" rx="0.5" fill="#f2f4f8" stroke="#b4bac8" stroke-width="1"/><path d="M7.2 217h4.6 M9.5 214.7v4.6" stroke="#444" stroke-width="0.8"/><path d="M323.5 166h4v5h1v1h-2.5v2.5h-1v-2.5h-2.5v-1h1z" fill="#222"/><path d="M324.5 166.5h1v4.5h-1z" fill="#fff" opacity="0.7"/><circle cx="306.7" cy="190.1" r="3.6" fill="none" stroke="#2e5a7a" stroke-width="1.8"/><path d="M309.3 192.8L313.4 196.6" stroke="#2e5a7a" stroke-width="2.2" stroke-linecap="round"/><circle cx="326.1" cy="192.4" r="6.5" fill="#9ba5d8"/><path d="M323 189.5l3.1 2.6 3.1-2.6 M323 192.8l3.1 2.6 3.1-2.6" fill="none" stroke="#dde3ff" stroke-width="1.1"/><path d="M322.8 340.8l3 -2.6 3 2.6 M322.8 343.8l3 -2.6 3 2.6" fill="none" stroke="#e8ecff" stroke-width="1.3"/><path d="M322.8 381.8l3 -2.6 3 2.6 M322.8 384.8l3 -2.6 3 2.6" fill="none" stroke="#e8ecff" stroke-width="1.3"/><path d="M322.8 481.8l3 -2.6 3 2.6 M322.8 484.8l3 -2.6 3 2.6" fill="none" stroke="#e8ecff" stroke-width="1.3"/><path d="M325.5 359.5h5l-2.5 3z" fill="#111"/><path d="M325.5 401.0h5l-2.5 3z" fill="#111"/><path d="M325.5 420.0h5l-2.5 3z" fill="#111"/></svg>
<svg style="left:0;top:0" width="1536" height="160"><defs>
<radialGradient id="ball" cx="0.38" cy="0.32" r="0.75"><stop offset="0" stop-color="#ffffff"/><stop offset="0.55" stop-color="#ececec"/><stop offset="1" stop-color="#9a9a9a"/></radialGradient>
<linearGradient id="calh" x1="0" y1="0" x2="0" y2="1"><stop offset="0" stop-color="#a9c8f5"/><stop offset="1" stop-color="#5d92e0"/></linearGradient>
<linearGradient id="fold" x1="0" y1="0" x2="1" y2="1"><stop offset="0" stop-color="#2fb04a"/><stop offset="1" stop-color="#c8e020"/></linearGradient>
</defs><rect x="18" y="82" width="20" height="5" fill="#9c9c9c"/><rect x="18" y="87" width="26" height="5" fill="#c6c6c6"/><rect x="18" y="92" width="26.5" height="4.5" fill="#2e2e2e"/><rect x="37.5" y="79.5" width="10" height="9" rx="1.5" fill="#c2c2c2" stroke="#6a6a6a" stroke-width="1"/><path d="M40.5 83h4l-2 2z" fill="#222"/><rect x="75.5" y="81" width="22" height="12.5" fill="none" stroke="#3a3a3a" stroke-width="2"/><path d="M74.5 100.5h24 M74.5 97v5 M98.5 97v5" stroke="#222" stroke-width="1.2"/><path d="M74.5 100.5l3 -2v4z M98.5 100.5l-3 -2v4z" fill="#222"/><rect x="123" y="81" width="21.5" height="13" fill="none" stroke="#3a3a3a" stroke-width="2"/><path d="M133.5 76.5V85" stroke="#1a8a8a" stroke-width="2"/><path d="M129.3 84h8.4l-4.2 5z" fill="#1a8a8a"/><rect x="165" y="77" width="28.5" height="5.5" fill="#3c3c3c"/><rect x="166" y="78" width="15" height="3.5" fill="#b8b8b8"/><rect x="165" y="85.5" width="20.5" height="5.5" fill="#3c3c3c"/><rect x="166" y="86.5" width="12" height="3.5" fill="#b8b8b8"/><rect x="165" y="93.5" width="12.5" height="5.5" fill="#3c3c3c"/><rect x="166" y="94.5" width="6" height="3.5" fill="#b8b8b8"/><circle cx="224.5" cy="83.5" r="7.5" fill="none" stroke="#333" stroke-width="2.2"/><path d="M219 89L211.5 97.5" stroke="#333" stroke-width="3.2" stroke-linecap="round"/><rect x="267.5" y="73.5" width="27.5" height="29" fill="#f2f8fd" stroke="#7d92b2" stroke-width="1"/><rect x="268" y="74" width="26.5" height="8.5" fill="url(#calh)"/><text x="280.5" y="81" font-size="6.8" font-weight="bold" fill="#1e48a0" font-family="Liberation Sans" font-style="italic">123</text><rect x="270" y="85.5" width="3.5" height="2.8" fill="#a8b0b4"/><rect x="274.5" y="85.5" width="3.5" height="2.8" fill="#a8b0b4"/><rect x="279" y="85.5" width="3.5" height="2.8" fill="#a8b0b4"/><rect x="283.5" y="85.5" width="3.5" height="2.8" fill="#a8b0b4"/><rect x="288" y="85.5" width="3.5" height="2.8" fill="#e8c898"/><rect x="270" y="89.5" width="3.5" height="2.8" fill="#a8b0b4"/><rect x="274.5" y="89.5" width="3.5" height="2.8" fill="#a8b0b4"/><rect x="270" y="93.5" width="3.5" height="2.8" fill="#a8b0b4"/><rect x="274.5" y="93.5" width="3.5" height="2.8" fill="#a8b0b4"/><rect x="270" y="97.5" width="3.5" height="2.8" fill="#a8b0b4"/><rect x="274.5" y="97.5" width="3.5" height="2.8" fill="#a8b0b4"/><path d="M289 97.5l3 3" stroke="#5a7890" stroke-width="1.5"/><circle cx="285.2" cy="93.8" r="5.6" fill="#cfe8fb" stroke="#4d8cc8" stroke-width="1.3"/><path d="M283.3 90.6v6.2l4.6-3.1z" fill="#1a4a98"/><circle cx="330.7" cy="87.5" r="14" fill="url(#ball)"/><rect x="362" y="75" width="26" height="25.2" fill="#f6f4f0" stroke="#b0b0b0" stroke-width="1.4"/><path d="M365.1 76.9h6.9l-0.4 11.3z" fill="#ee5560"/><path d="M371.6 88.2l6.9 11h-6.9z" fill="#6a92c4"/><path d="M371.5 76v23.5" stroke="#9a9a9a" stroke-width="0.8"/><path d="M380.2 81.2c3.2 1.5 4.2 4.5 3.2 7.3c-0.8 2.3-2.2 3.8-3.8 5" fill="none" stroke="#262626" stroke-width="1.8" stroke-linecap="round"/><path d="M378.3 78.3l1.8 1.8 1.8-1.8" fill="none" stroke="#262626" stroke-width="1.1"/><path d="M359 92.2h5v-3l5 5.2-5 5.2v-3h-5z" fill="#22aa44"/><g fill="none" stroke="#444" stroke-width="1.2"><circle cx="416.7" cy="86.6" r="4.5"/><path d="M419.8 89.8L425 94.8"/></g><g fill="none" stroke="#6d8c8c" stroke-width="1.4"><circle cx="438.9" cy="86.3" r="4.6" fill="#e4f2f4"/><path d="M442 89.5L446.5 94.2"/></g><rect x="436.4" y="83.8" width="5" height="5" fill="none" stroke="#8aa4a8" stroke-width="0.9"/><path d="M457 88.5l6.5-6.8 6.5 6.8 M458.8 87v7.8h3.5v-4.6h3v4.6h3.5v-7.8 M457.5 94.8h12" fill="none" stroke="#444" stroke-width="1.3"/><text x="412" y="125.7" font-size="15" fill="#333" font-family="Liberation Sans">A</text><text x="421" y="118.5" font-size="9" fill="#333" font-family="Liberation Sans">+</text><text x="434.5" y="125.7" font-size="15" fill="#333" font-family="Liberation Sans">A</text><path d="M444 116.5h4" stroke="#333" stroke-width="1"/><path d="M457.5 112.5h9l3.5 3.5v11h-12.5z" fill="#dde4f0" stroke="#8a9ab0" stroke-width="0.8"/><text x="456.5" y="124.5" font-size="12" font-weight="bold" fill="#a01818" font-family="Liberation Sans">A</text><path d="M491.5 86.8h28.5" stroke="#94b4dc" stroke-width="1.6"/><path d="M490.3 90.8l2.5-3.3 2.5 3.3z M516.8 90.8l2.5-3.3 2.5 3.3z" fill="#98301e"/><path d="M554 90.8h28" stroke="#94b4dc" stroke-width="1.6"/><path d="M552.8 94.8l2.5-3.3 2.5 3.3z M579.3 94.8l2.5-3.3 2.5 3.3z" fill="#98301e"/><path d="M559.5 81.5V87" stroke="#b05252" stroke-width="1"/><path d="M557.7 86h3.6l-1.8 3z" fill="#b05252"/><path d="M565.5 81.5V87" stroke="#b05252" stroke-width="1"/><path d="M563.7 86h3.6l-1.8 3z" fill="#b05252"/><path d="M571.5 81.5V87" stroke="#b05252" stroke-width="1"/><path d="M569.7 86h3.6l-1.8 3z" fill="#b05252"/><path d="M577.5 81.5V87" stroke="#b05252" stroke-width="1"/><path d="M575.7 86h3.6l-1.8 3z" fill="#b05252"/><path d="M503.5 125.5h6l-3 3z M565.5 125.5h6l-3 3z" fill="#666"/><rect x="609.5" y="92.5" width="216" height="22" fill="#fff" stroke="#d8d8d8" stroke-width="1"/><path d="M816.5 102h6l-3 3z" fill="#777"/><g fill="none" stroke="#555" stroke-width="1.1"><path d="M903.5 77.5a5.8 5.8 0 0 1 9.8 -3.5"/><path d="M914 80a5.8 5.8 0 0 1 -9.8 3.8"/></g><circle cx="908.5" cy="73" r="1.2" fill="#333"/><circle cx="909" cy="84.8" r="1.2" fill="#333"/><rect x="898" y="92" width="22" height="23" fill="#c9c9c9"/><rect x="902" y="98.5" width="14" height="9" fill="#eef3ee" stroke="#333" stroke-width="1.3"/><path d="M902 96v9l8-4.5z" fill="#3a8a3a"/><rect x="913" y="99.5" width="2" height="7" fill="#333"/><rect x="902.5" y="121" width="12.5" height="12.5" fill="none" stroke="#333" stroke-width="2"/><rect x="902" y="128" width="6" height="6" fill="#333"/><path d="M907 128.5l5.5-5.5 M908.5 123h4v4" fill="none" stroke="#333" stroke-width="1.8"/><rect x="924.6" y="73.0" width="3" height="3" fill="#f4f4f4" stroke="#5c7a90" stroke-width="1"/><rect x="924.6" y="77.6" width="3" height="3" fill="#5c7a90" stroke="#5c7a90" stroke-width="1"/><rect x="924.6" y="82.2" width="3" height="3" fill="#5c7a90" stroke="#5c7a90" stroke-width="1"/><rect x="924.6" y="97.0" width="3" height="3" fill="#f4f4f4" stroke="#b0b0b0" stroke-width="1"/><rect x="924.6" y="101.6" width="3" height="3" fill="#b0b0b0" stroke="#b0b0b0" stroke-width="1"/><rect x="924.6" y="106.2" width="3" height="3" fill="#b0b0b0" stroke="#b0b0b0" stroke-width="1"/><rect x="924.6" y="121.0" width="3" height="3" fill="#f4f4f4" stroke="#5c7a90" stroke-width="1"/><rect x="924.6" y="125.6" width="3" height="3" fill="#5c7a90" stroke="#5c7a90" stroke-width="1"/><rect x="924.6" y="130.2" width="3" height="3" fill="#5c7a90" stroke="#5c7a90" stroke-width="1"/><path d="M929.5 78.5h7" stroke="#333" stroke-width="1.8"/><path d="M934.5 75l4 3.5-4 3.5z" fill="#333"/><path d="M932 102.5h7" stroke="#aaa" stroke-width="1.8"/><path d="M933 99l-4 3.5 4 3.5z" fill="#aaa"/><path d="M931 124.5l6 6" stroke="#333" stroke-width="2.2"/><circle cx="931" cy="124.5" r="2.5" fill="#333"/><path d="M972.5 102h5l-2.5 2.5z" fill="#c0c0c0"/><rect x="1010" y="75" width="25.5" height="25.5" fill="#7b72c2"/><rect x="1014.5" y="76" width="13" height="12" fill="#f4f4f8"/><rect x="1015.5" y="92" width="11" height="8.5" fill="#eaeaea"/><rect x="1018" y="93.5" width="3" height="6" fill="#7b72c2"/><path d="M1026.5 75.5l12 -2.5v20l-12 3z" fill="url(#fold)"/><path d="M1026.5 75.5h4v19.5l-4 1z" fill="#26a040"/><rect x="1054.5" y="72.5" width="31" height="31" rx="5.5" fill="#8a8a8a"/><text x="1070" y="93" text-anchor="middle" font-size="14.5" font-weight="bold" fill="#fff" font-family="Liberation Sans" letter-spacing="-0.5">DIN</text><path d="M1102 75h14 M1104.5 75.5v8.5l-7.5 15.5h24.5l-7.5-15.5v-8.5" fill="none" stroke="#3c3c3c" stroke-width="2.6" stroke-linejoin="round"/><path d="M1104 88h9.5l6 11.5h-21z" fill="#3c3c3c"/><path d="M1107 84l-6 14" stroke="#f0f0f0" stroke-width="1.3"/><path d="M1518 155l5-4.5 5 4.5" fill="none" stroke="#555" stroke-width="1.2"/></svg>
<div class="t" style="left:611.7px;top:98.6px;font-size:11.85px;color:#444;font-weight:normal;">Superposition 1 : 1.35*G + 1.5*Q</div></body></html>
